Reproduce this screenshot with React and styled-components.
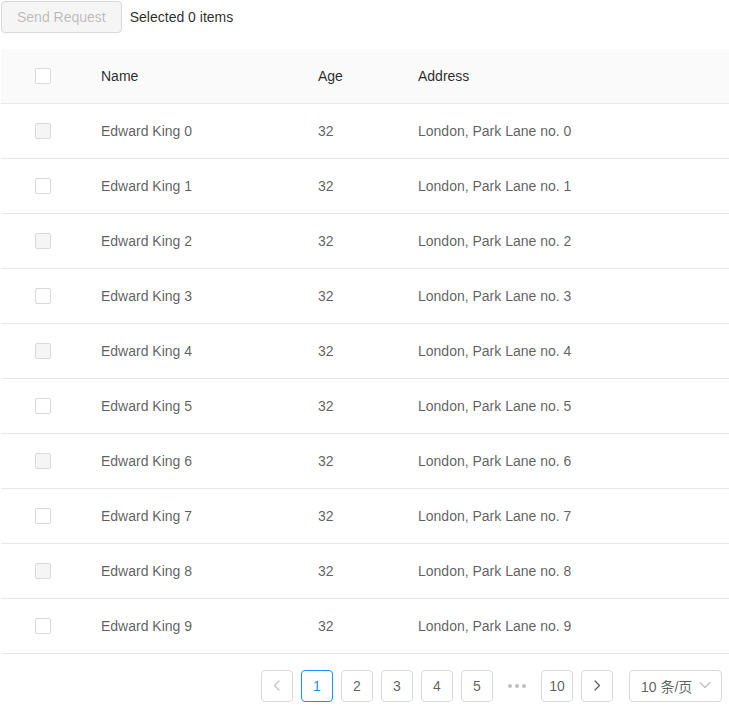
import styled, { createGlobalStyle } from "styled-components";

const GlobalStyle = createGlobalStyle`
  html, body {
    margin: 0;
    padding: 0;
    background: #fff;
  }
  body {
    font-family: "Liberation Sans", Arial, "Noto Sans CJK SC", sans-serif;
    font-size: 14px;
    color: rgba(0, 0, 0, 0.65);
  }
`;

const data = Array.from({ length: 10 }, (_, i) => ({
  key: i,
  name: `Edward King ${i}`,
  age: 32,
  address: `London, Park Lane no. ${i}`,
  disabled: i % 2 === 0,
}));

const Page = styled.div`
  padding: 1px 0 0 1px;
`;

const Toolbar = styled.div`
  display: flex;
  align-items: center;
  height: 32px;
`;

const Button = styled.button`
  height: 32px;
  padding: 0 15px;
  font-family: inherit;
  font-size: 14px;
  border: 1px solid #d9d9d9;
  border-radius: 4px;
  background: #f5f5f5;
  color: rgba(0, 0, 0, 0.25);
  cursor: not-allowed;
`;

const SelectedText = styled.span`
  margin-left: 8px;
  color: rgba(0, 0, 0, 0.85);
`;

const Table = styled.table`
  width: 728px;
  margin-top: 16px;
  border-collapse: collapse;
  border-spacing: 0;
  text-align: left;
`;

const Th = styled.th`
  height: 54px;
  padding: 0 16px;
  background: #fafafa;
  border-bottom: 1px solid #e8e8e8;
  font-weight: 400;
  color: rgba(0, 0, 0, 0.85);
  width: ${p => p.$w || "auto"};
  text-align: ${p => (p.$center ? "center" : "left")};
  box-sizing: border-box;
`;

const Td = styled.td`
  height: 54px;
  padding: 0 16px;
  border-bottom: 1px solid #e8e8e8;
  text-align: ${p => (p.$center ? "center" : "left")};
`;

const Checkbox = styled.span`
  display: inline-block;
  vertical-align: middle;
  width: 16px;
  height: 16px;
  box-sizing: border-box;
  border: 1px solid #d9d9d9;
  border-radius: 2px;
  background: ${p => (p.$disabled ? "#f5f5f5" : "#fff")};
`;

const Pagination = styled.div`
  display: flex;
  justify-content: flex-end;
  align-items: center;
  gap: 8px;
  margin: 16px 0;
  padding-right: 7px;
`;

const PageItem = styled.div`
  min-width: 32px;
  height: 32px;
  box-sizing: border-box;
  display: flex;
  align-items: center;
  justify-content: center;
  border: 1px solid ${p => (p.$active ? "#1890ff" : "#d9d9d9")};
  border-radius: 4px;
  color: ${p => (p.$active ? "#1890ff" : "rgba(0, 0, 0, 0.65)")};
  background: #fff;
`;

const Ellipsis = styled.div`
  width: 32px;
  height: 32px;
  display: flex;
  align-items: center;
  justify-content: center;
  gap: 3px;

  span {
    width: 4px;
    height: 4px;
    border-radius: 50%;
    background: rgba(0, 0, 0, 0.25);
  }
`;

const SizeChanger = styled.div`
  margin-left: 8px;
  width: 93px;
  height: 32px;
  box-sizing: border-box;
  display: flex;
  align-items: center;
  justify-content: space-between;
  padding: 0 10px 0 11px;
  border: 1px solid #d9d9d9;
  border-radius: 4px;
  color: rgba(0, 0, 0, 0.65);
`;

const Chevron = ({ dir = "left", color }) => {
  const d =
    dir === "left"
      ? "M8 2 L3.5 6.5 L8 11"
      : dir === "right"
      ? "M4 2 L8.5 6.5 L4 11"
      : "M1 3.5 L6 8.5 L11 3.5";
  return (
    <svg width="12" height="13" viewBox="0 0 12 13" fill="none">
      <path d={d} stroke={color} strokeWidth="1.2" strokeLinecap="round" strokeLinejoin="round" />
    </svg>
  );
};

const App = () => {
  return (
    <>
      <GlobalStyle />
      <Page>
        <Toolbar>
          <Button disabled>Send Request</Button>
          <SelectedText>Selected 0 items</SelectedText>
        </Toolbar>
        <Table>
          <thead>
            <tr>
              <Th $w="84px" $center>
                <Checkbox />
              </Th>
              <Th $w="217px">Name</Th>
              <Th $w="100px">Age</Th>
              <Th>Address</Th>
            </tr>
          </thead>
          <tbody>
            {data.map(row => (
              <tr key={row.key}>
                <Td $center>
                  <Checkbox $disabled={row.disabled} />
                </Td>
                <Td>{row.name}</Td>
                <Td>{row.age}</Td>
                <Td>{row.address}</Td>
              </tr>
            ))}
          </tbody>
        </Table>
        <Pagination>
          <PageItem>
            <Chevron dir="left" color="rgba(0,0,0,0.25)" />
          </PageItem>
          <PageItem $active>1</PageItem>
          <PageItem>2</PageItem>
          <PageItem>3</PageItem>
          <PageItem>4</PageItem>
          <PageItem>5</PageItem>
          <Ellipsis>
            <span />
            <span />
            <span />
          </Ellipsis>
          <PageItem>10</PageItem>
          <PageItem>
            <Chevron dir="right" color="rgba(0,0,0,0.65)" />
          </PageItem>
          <SizeChanger>
            <span>10 条/页</span>
            <Chevron dir="down" color="rgba(0,0,0,0.25)" />
          </SizeChanger>
        </Pagination>
      </Page>
    </>
  );
};

export default App;
